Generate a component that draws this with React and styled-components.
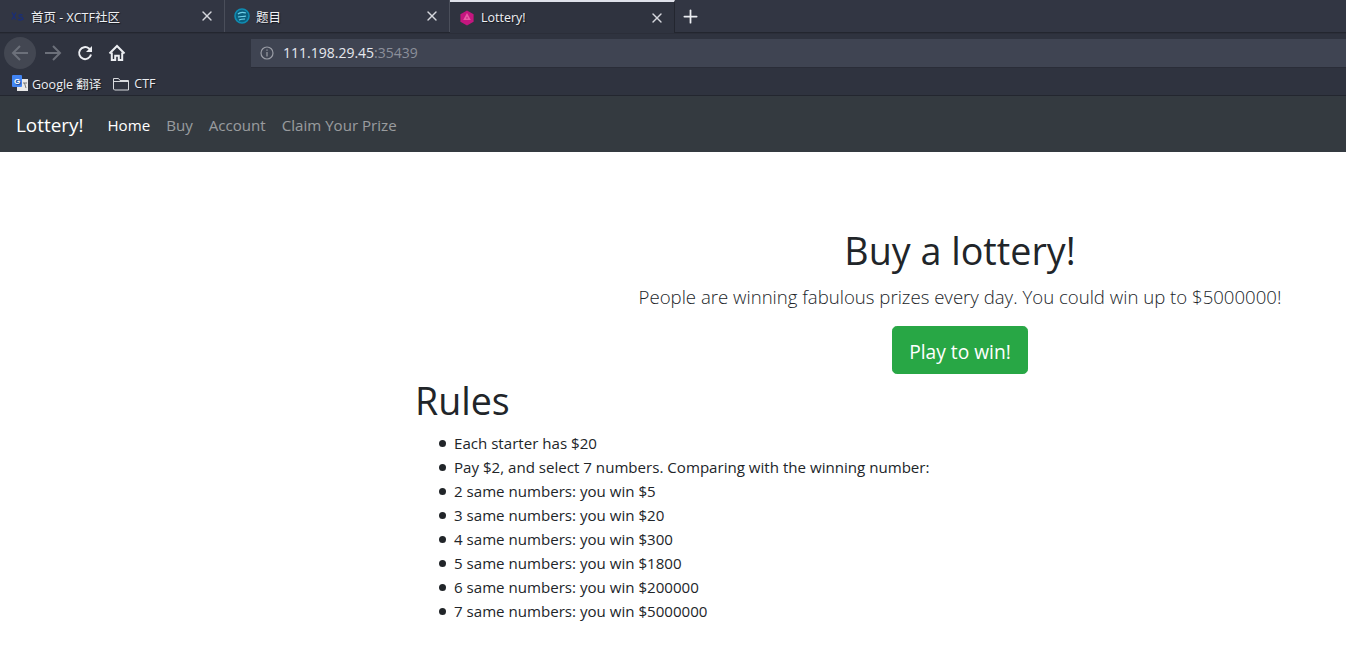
import React from 'react';
import styled, { createGlobalStyle } from 'styled-components';
import { Plus, X } from 'lucide-react';

const GlobalStyle = createGlobalStyle`
  html, body {
    margin: 0;
    padding: 0;
    height: 100%;
    overflow: hidden;
    background: #fff;
  }
  body {
    font-family: "Open Sans", "Noto Sans CJK SC", sans-serif;
    color: #212529;
  }
  * {
    box-sizing: border-box;
  }
`;

const tabs = [
  { id: 'home', title: '首页 - XCTF社区', icon: <XctfIcon /> },
  { id: 'task', title: '题目', icon: <TaskIcon /> },
  { id: 'lottery', title: 'Lottery!', icon: <LotteryIcon />, active: true },
];

const rules = [
  'Each starter has $20',
  'Pay $2, and select 7 numbers. Comparing with the winning number:',
  '2 same numbers: you win $5',
  '3 same numbers: you win $20',
  '4 same numbers: you win $300',
  '5 same numbers: you win $1800',
  '6 same numbers: you win $200000',
  '7 same numbers: you win $5000000',
];

function XctfIcon() {
  return (
    <svg width="16" height="16" viewBox="0 0 16 16" fill="none" stroke="#1c2f73" strokeWidth="1.5">
      <path d="M3 4.500l4 7M7 4.500l-4 7M9 11.500c2 .6 5 .6 5-1s-4-1-4-2.500 2-1.500 3.500-1" />
    </svg>
  );
}

function TaskIcon() {
  return (
    <svg width="16" height="16" viewBox="0 0 16 16" fill="none">
      <circle cx="8" cy="8" r="7" stroke="#0f8db3" strokeWidth="1.6" fill="#0b5f7e" />
      <path d="M4 6c2-2 5-2 8-1M4 9c3-1 5 0 8-1M5 12c2-1 4-1 6-1" stroke="#6fd0e8" strokeWidth="1.2" />
    </svg>
  );
}

function LotteryIcon() {
  return (
    <svg width="16" height="16" viewBox="0 0 16 16">
      <path d="M8 0.500l6.600 3.700v7.600L8 15.500l-6.600-3.700V4.200z" fill="#c4167f" />
      <path d="M8 3l3.800 7H4.200z" fill="#e85aa6" />
      <path d="M8 6.500l1 2H7z" fill="#c4167f" />
    </svg>
  );
}

const App = () => (
  <>
    <GlobalStyle />
    <Browser>
      <TabStrip>
        {tabs.map((tab) => (
          <Tab key={tab.id} $active={tab.active}>
            <TabIcon>{tab.icon}</TabIcon>
            <TabTitle>{tab.title}</TabTitle>
            <TabClose>
              <X size={16} strokeWidth={2} />
            </TabClose>
          </Tab>
        ))}
        <NewTab>
          <Plus size={21} strokeWidth={2} />
        </NewTab>
      </TabStrip>

      <Toolbar>
        <BackButton>
          <svg width="18" height="18" viewBox="0 0 18 18" fill="none" stroke="#6c707a" strokeWidth="2">
            <path d="M17 9H2M9 2L2 9l7 7" />
          </svg>
        </BackButton>
        <NavButton>
          <svg width="18" height="18" viewBox="0 0 18 18" fill="none" stroke="#6c707a" strokeWidth="2">
            <path d="M1 9h15M9 2l7 7-7 7" />
          </svg>
        </NavButton>
        <NavButton>
          <svg width="18" height="18" viewBox="0 0 18 18" fill="none" stroke="#eceef2" strokeWidth="2">
            <path d="M15 10.500A6 6 0 1 1 13 4.500L15 6.500" />
            <path d="M16 2v6h-6z" fill="#eceef2" stroke="none" />
          </svg>
        </NavButton>
        <NavButton>
          <svg width="18" height="18" viewBox="0 0 18 18" fill="none" stroke="#eceef2" strokeWidth="2">
            <path d="M1.500 9.500L9 2l7.500 7.500" />
            <path d="M3.800 8.500V16h3.400v-4.200h3.600V16h3.400V8.500" />
          </svg>
        </NavButton>
        <UrlBar>
          <svg width="14" height="14" viewBox="0 0 14 14" fill="none" stroke="#9a9da6" strokeWidth="1.200">
            <circle cx="7" cy="7" r="6" />
            <path d="M7 6v4.500M7 3.400v1.400" />
          </svg>
          <UrlText>
            111.198.29.45<UrlPort>:35439</UrlPort>
          </UrlText>
        </UrlBar>
      </Toolbar>

      <Bookmarks>
        <Bookmark>
          <svg width="16" height="17" viewBox="0 0 16 17">
            <rect x="5" y="4" width="11" height="12" fill="#e8e8e8" />
            <rect x="0" y="0" width="10" height="12" rx="1" fill="#4285f4" />
            <text x="2" y="9" fontFamily="Liberation Sans" fontSize="8" fontWeight="700" fill="#fff">G</text>
            <path d="M11 8h4M12.500 8l1.500 5" stroke="#777" strokeWidth="1" />
          </svg>
          Google 翻译
        </Bookmark>
        <Bookmark $gap="5px">
          <svg width="16" height="14" viewBox="0 0 16 14" fill="none" stroke="#d8dade" strokeWidth="1">
            <path d="M0.500 12V1.500h5l1.500 2h8.500V13H1.500z" />
            <path d="M0.500 4.500h15" />
          </svg>
          CTF
        </Bookmark>
      </Bookmarks>

      <Navbar>
        <Brand>Lottery!</Brand>
        <NavLink $current>Home</NavLink>
        <NavLink>Buy</NavLink>
        <NavLink>Account</NavLink>
        <NavLink>Claim Your Prize</NavLink>
      </Navbar>

      <Main>
        <Hero>
          <HeroTitle>Buy a lottery!</HeroTitle>
          <Lead>People are winning fabulous prizes every day. You could win up to $5000000!</Lead>
          <PlayButton>Play to win!</PlayButton>
        </Hero>
        <RulesTitle>Rules</RulesTitle>
        <RulesList>
          {rules.map((rule) => (
            <li key={rule}>{rule}</li>
          ))}
        </RulesList>
      </Main>
    </Browser>
  </>
);

const Browser = styled.div`
  width: 1346px;
  height: 661px;
  overflow: hidden;
`;

const TabStrip = styled.div`
  display: flex;
  height: 33px;
  background: #323643;
  border-bottom: 1px solid #23262f;
`;

const Tab = styled.div`
  display: flex;
  align-items: center;
  width: 225px;
  height: ${(p) => (p.$active ? '33px' : '32px')};
  padding: 0 9px 0 9px;
  color: #eef0f4;
  background: ${(p) => (p.$active ? '#2f333f' : 'transparent')};
  border-right: 1px solid ${(p) => (p.$active ? '#23262f' : '#4a4e5a')};
  border-top: ${(p) => (p.$active ? '2px solid #dfe1ea' : 'none')};
`;

const TabIcon = styled.span`
  display: flex;
  width: 16px;
  height: 16px;
  margin-right: 6px;
`;

const TabTitle = styled.span`
  flex: 1;
  font-size: 12.500px;
  white-space: nowrap;
  text-shadow: 1px 1px 1px rgba(0, 0, 0, 0.55);
`;

const TabClose = styled.span`
  display: flex;
  color: #d5d7dd;
`;

const NewTab = styled.div`
  display: flex;
  align-items: center;
  justify-content: center;
  width: 30px;
  height: 32px;
  color: #eceef2;
`;

const Toolbar = styled.div`
  display: flex;
  align-items: center;
  height: 39px;
  padding-left: 4px;
  background: #2f333f;
  border-top: 1px solid #2b2e39;
`;

const NavButton = styled.span`
  display: flex;
  align-items: center;
  justify-content: center;
  width: 32px;
  height: 32px;
`;

const BackButton = styled(NavButton)`
  margin-right: 1px;
  border-radius: 50%;
  background: #434752;
`;

const UrlBar = styled.div`
  display: flex;
  align-items: center;
  flex: 1;
  height: 29px;
  margin-left: 118px;
  padding-left: 9px;
  background: #3f4452;
  border-bottom: 1px solid #2a2d38;
`;

const UrlText = styled.span`
  margin-left: 9px;
  font-size: 14px;
  color: #e6e8ee;
`;

const UrlPort = styled.span`
  color: #8b8f9a;
`;

const Bookmarks = styled.div`
  display: flex;
  align-items: center;
  gap: 12px;
  height: 24px;
  padding-left: 12px;
  background: #2f333f;
  border-bottom: 1px solid #23262f;
`;

const Bookmark = styled.span`
  display: flex;
  align-items: center;
  gap: ${(p) => p.$gap || '4px'};
  font-size: 12.500px;
  color: #eceef2;
  text-shadow: 1px 1px 1px rgba(0, 0, 0, 0.55);
`;

const Navbar = styled.nav`
  display: flex;
  align-items: center;
  height: 56px;
  padding: 2px 16px 0;
  background: #343a40;
`;

const Brand = styled.span`
  margin-right: 16px;
  font-size: 18.900px;
  color: #fff;
`;

const NavLink = styled.span`
  padding: 0 8px;
  font-size: 15.100px;
  color: ${(p) => (p.$current ? '#fff' : 'rgba(255, 255, 255, 0.5)')};
`;

const Main = styled.main`
  width: 1120px;
  margin-left: 400px;
  padding: 0 15px;
`;

const Hero = styled.section`
  display: flex;
  flex-direction: column;
  align-items: center;
  padding-top: 75px;
`;

const HeroTitle = styled.h1`
  margin: 0 0 7px;
  font-size: 37.700px;
  font-weight: 400;
  line-height: 48px;
`;

const Lead = styled.p`
  margin: 0 0 14px;
  font-size: 18.600px;
  font-weight: 300;
  line-height: 30px;
`;

const PlayButton = styled.button`
  width: 136px;
  height: 48px;
  padding: 3px 0 0;
  font-family: inherit;
  font-size: 19.200px;
  color: #fff;
  background: #28a745;
  border: 1px solid #28a745;
  border-radius: 4.800px;
`;

const RulesTitle = styled.h2`
  margin: 3px 0 6px;
  font-size: 37.600px;
  font-weight: 400;
  line-height: 48px;
`;

const RulesList = styled.ul`
  margin: 0;
  padding-left: 39px;
  list-style: none;
  font-size: 15.100px;

  li {
    display: flex;
    align-items: center;
    height: 24px;
  }

  li::before {
    content: '';
    flex: none;
    width: 7px;
    height: 7px;
    margin: 0 8px 0 -15px;
    border-radius: 50%;
    background: #212529;
  }
`;

export default App;
